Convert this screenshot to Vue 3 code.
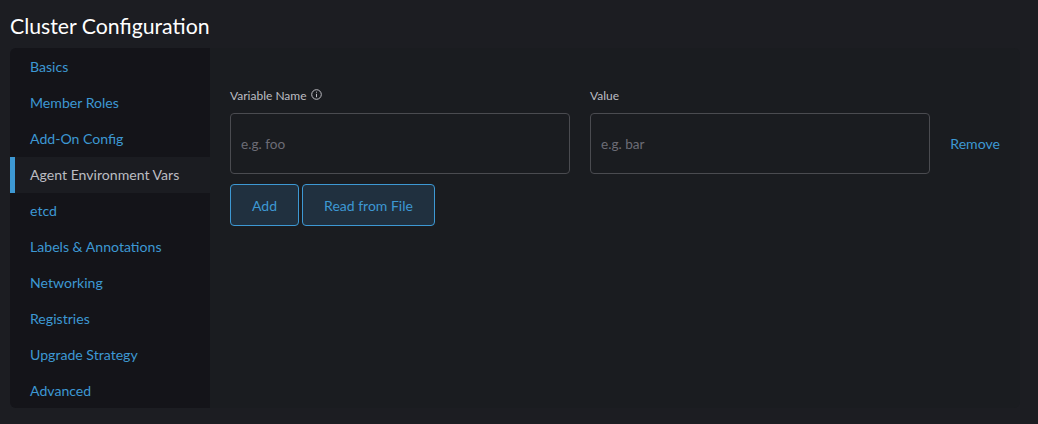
<script setup>
const tabs = ['Basics','Member Roles','Add-On Config','Agent Environment Vars','etcd','Labels & Annotations','Networking','Registries','Upgrade Strategy','Advanced']
const activeTab = 'Agent Environment Vars'
</script>

<template>
  <div class="page">
    <h1 class="title">Cluster Configuration</h1>
    <div class="card">
      <nav class="side">
        <a v-for="t in tabs" :key="t" class="tab" :class="{ active: t === activeTab }">{{ t }}</a>
      </nav>
      <main class="body">
        <div class="row heads">
          <div class="col lab">Variable Name
            <svg class="info" width="11" height="11" viewBox="0 0 11 11" fill="none" stroke="#bcbcc2" stroke-width="1">
              <circle cx="5.5" cy="5.5" r="4.8"/>
              <path d="M5.5 4.8V8.2M5.5 2.7V3.7"/>
            </svg>
          </div>
          <div class="col lab">Value</div>
          <div class="spacer"></div>
        </div>
        <div class="row inputs">
          <input class="col field" placeholder="e.g. foo" />
          <input class="col field" placeholder="e.g. bar" />
          <a class="spacer remove">Remove</a>
        </div>
        <div class="actions">
          <button class="btn add">Add</button>
          <button class="btn read">Read from File</button>
        </div>
      </main>
    </div>
  </div>
</template>

<style>
html, body { margin: 0; background: #1c1d22; }
</style>

<style scoped>
.page {
  width: 1038px; height: 424px; box-sizing: border-box; overflow: hidden;
  padding: 0 18px 0 10px; background: #1c1d22;
  font-family: Lato, "Open Sans", sans-serif; font-size: 14.1px; color: #e6e6e8;
}
.title { margin: 0; height: 48px; padding-top: 13px; box-sizing: border-box; font-size: 21.25px; line-height: 26px; font-weight: 400; color: #fff; }
.card { display: flex; height: 360px; border-radius: 6px; overflow: hidden; background: #1a1c20; }
.side { width: 200px; flex: none; background: #141419; padding-top: 1px; box-sizing: border-box; }
.tab { display: flex; align-items: center; height: 36px; box-sizing: border-box; padding: 0 0 2px 20px; color: #3d98d3; }
.tab.active { background: #1b1c21; color: #bcbcc2; border-left: 5px solid #3d98d3; padding-left: 15px; }
.body { flex: 1; padding: 39px 20px 0; min-width: 0; }
.row { display: flex; gap: 20px; }
.col { width: 340px; flex: none; box-sizing: border-box; }
.spacer { flex: 1; }
.heads { height: 26px; }
.lab { font-size: 12px; line-height: 18px; color: #bcbcc2; }
.info { margin-left: 1px; vertical-align: 0; }
.inputs { align-items: center; }
.field { height: 61px; background: #1a1c20; border: 1px solid #4a4b50; border-radius: 4px; padding: 0 10px; font: 14px Lato, sans-serif; color: #e6e6e8; outline: none; }
.field::placeholder { color: #6c6c76; opacity: 1; font-size: 13.6px; }
.remove { color: #3d98d3; text-align: right; }
.actions { display: flex; gap: 3px; margin-top: 10px; }
.btn { height: 42px; background: #20303f; border: 1px solid #3d98d3; border-radius: 4px; color: #3d98d3; font: 14px Lato, sans-serif; padding: 0; box-sizing: border-box; }
.add { width: 69px; }
.read { width: 133px; }
</style>
